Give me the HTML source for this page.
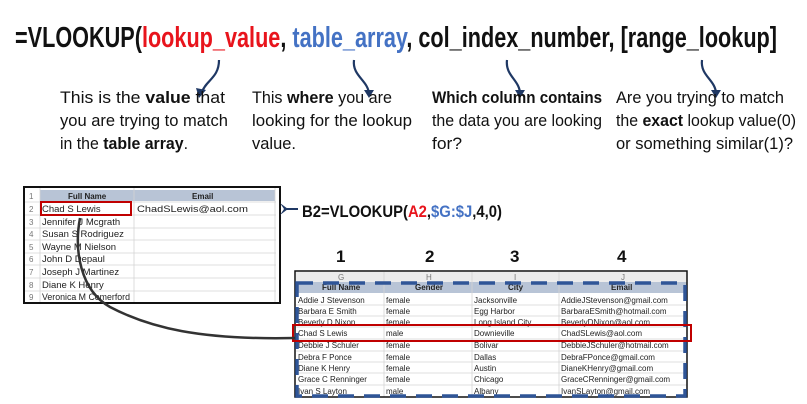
<!DOCTYPE html>
<html><head><meta charset="utf-8"><style>
html,body{margin:0;padding:0;background:#fff;}
svg{display:block;}
text{font-family:"Liberation Sans",sans-serif;}
.s{font-size:8px;fill:#222;}
.h{font-size:8px;font-weight:bold;fill:#222;}
.l{font-size:9.5px;fill:#222;}
.t{font-size:17px;fill:#111;}
</style></head><body>
<svg width="807" height="404" viewBox="0 0 807 404" xmlns="http://www.w3.org/2000/svg">
<rect width="807" height="404" fill="#fff"/>
<text x="15" y="47" font-size="29" font-weight="bold" textLength="762" lengthAdjust="spacingAndGlyphs" fill="#111">=VLOOKUP(<tspan fill="#e8141c">lookup_value</tspan>, <tspan fill="#4472c4">table_array</tspan>, col_index_number, [range_lookup]</text>
<g fill="none" stroke="#1f3864" stroke-width="2.2">
<path d="M219 60 C219 78 206 80 202 92"/>
<path d="M354 60 C352 76 368 80 369 94"/>
<path d="M507 60 C505 76 520 80 520 94"/>
<path d="M702 60 C700 76 716 80 716 94"/>
</g>
<g fill="#1f3864">
<path d="M196 88 L206 90 L199 98 Z"/>
<path d="M364 90 L374 90 L369 98 Z"/>
<path d="M515 90 L525 90 L520 98 Z"/>
<path d="M711 90 L721 90 L716 98 Z"/>
</g>
<text class="t" x="60" y="103" textLength="165" lengthAdjust="spacingAndGlyphs">This is the <tspan font-weight="bold">value</tspan> that</text>
<text class="t" x="60" y="126" textLength="168" lengthAdjust="spacingAndGlyphs">you are trying to match</text>
<text class="t" x="60" y="149" textLength="128" lengthAdjust="spacingAndGlyphs">in the <tspan font-weight="bold">table array</tspan>.</text>
<text class="t" x="252" y="103" textLength="140" lengthAdjust="spacingAndGlyphs">This <tspan font-weight="bold">where</tspan> you are</text>
<text class="t" x="252" y="126" textLength="160" lengthAdjust="spacingAndGlyphs">looking for the lookup</text>
<text class="t" x="252" y="149" textLength="44" lengthAdjust="spacingAndGlyphs">value.</text>
<text class="t" x="432" y="103" textLength="170" lengthAdjust="spacingAndGlyphs" font-weight="bold">Which column contains</text>
<text class="t" x="432" y="126" textLength="170" lengthAdjust="spacingAndGlyphs">the data you are looking</text>
<text class="t" x="432" y="149" textLength="30" lengthAdjust="spacingAndGlyphs">for?</text>
<text class="t" x="616" y="103" textLength="168" lengthAdjust="spacingAndGlyphs">Are you trying to match</text>
<text class="t" x="616" y="126" textLength="180" lengthAdjust="spacingAndGlyphs">the <tspan font-weight="bold">exact</tspan> lookup value(0)</text>
<text class="t" x="616" y="149" textLength="177" lengthAdjust="spacingAndGlyphs">or something similar(1)?</text>

<rect x="40" y="190" width="235" height="11" fill="#b8c4d6"/>
<g stroke="#d4d4d4" stroke-width="0.8">
<line x1="24" y1="202" x2="276" y2="202"/><line x1="24" y1="215" x2="276" y2="215"/>
<line x1="24" y1="228" x2="276" y2="228"/><line x1="24" y1="240" x2="276" y2="240"/>
<line x1="24" y1="253" x2="276" y2="253"/><line x1="24" y1="265" x2="276" y2="265"/>
<line x1="24" y1="278" x2="276" y2="278"/><line x1="24" y1="291" x2="276" y2="291"/>
<line x1="40" y1="188" x2="40" y2="303"/><line x1="134" y1="188" x2="134" y2="303"/>
<line x1="275" y1="188" x2="275" y2="303"/>
</g>
<rect x="24" y="187" width="256" height="116" fill="none" stroke="#111" stroke-width="2"/>
<g font-size="8" fill="#777">
<text x="29" y="199" fill="#777">1</text><text x="29" y="212" fill="#777">2</text><text x="29" y="225" fill="#777">3</text>
<text x="29" y="237" fill="#777">4</text><text x="29" y="250" fill="#777">5</text><text x="29" y="262" fill="#777">6</text>
<text x="29" y="275" fill="#777">7</text><text x="29" y="288" fill="#777">8</text><text x="29" y="300" fill="#777">9</text>
</g>
<text class="h" x="68" y="199">Full Name</text><text class="h" x="192" y="199">Email</text>
<text class="l" x="42" y="212">Chad S Lewis</text><text class="l" x="137" y="212" textLength="111" lengthAdjust="spacingAndGlyphs">ChadSLewis@aol.com</text>
<text class="l" x="42" y="225">Jennifer J Mcgrath</text>
<text class="l" x="42" y="237">Susan S Rodriguez</text>
<text class="l" x="42" y="250">Wayne M Nielson</text>
<text class="l" x="42" y="262">John D Depaul</text>
<text class="l" x="42" y="275">Joseph J Martinez</text>
<text class="l" x="42" y="288">Diane K Henry</text>
<text class="l" x="42" y="300" textLength="88" lengthAdjust="spacingAndGlyphs">Veronica M Comerford</text>
<rect x="41" y="202" width="90" height="13" fill="none" stroke="#c00000" stroke-width="2"/>

<path d="M298 209 L284 209" stroke="#1f3864" stroke-width="2"/>
<path d="M280 203 L288 209 L280 215 L284 209 Z" fill="#1f3864"/>
<text x="302" y="217" font-size="17" font-weight="bold" textLength="200" lengthAdjust="spacingAndGlyphs" fill="#111">B2=VLOOKUP(<tspan fill="#e8141c">A2</tspan>,<tspan fill="#4472c4">$G:$J</tspan>,4,0)</text>

<g font-size="17" font-weight="bold" fill="#111">
<text x="336" y="262">1</text><text x="425" y="262">2</text><text x="510" y="262">3</text><text x="617" y="262">4</text>
</g>

<rect x="296" y="272" width="391" height="10" fill="#ececec"/>
<rect x="296" y="282" width="391" height="11" fill="#b8c4d6"/>
<g stroke="#d4d4d4" stroke-width="0.8">
<line x1="296" y1="305" x2="687" y2="305"/><line x1="296" y1="316" x2="687" y2="316"/>
<line x1="296" y1="327" x2="687" y2="327"/><line x1="296" y1="339" x2="687" y2="339"/>
<line x1="296" y1="351" x2="687" y2="351"/><line x1="296" y1="362" x2="687" y2="362"/>
<line x1="296" y1="373" x2="687" y2="373"/><line x1="296" y1="385" x2="687" y2="385"/>
<line x1="384" y1="272" x2="384" y2="397"/><line x1="472" y1="272" x2="472" y2="397"/>
<line x1="559" y1="272" x2="559" y2="397"/>
</g>
<rect x="295" y="271" width="392" height="126" fill="none" stroke="#111" stroke-width="1.5"/>
<g font-size="8" fill="#777">
<text x="338" y="280" fill="#777">G</text><text x="426" y="280" fill="#777">H</text><text x="514" y="280" fill="#777">I</text><text x="621" y="280" fill="#777">J</text>
</g>
<text class="h" x="322" y="290">Full Name</text><text class="h" x="415" y="290">Gender</text>
<text class="h" x="508" y="290">City</text><text class="h" x="611" y="290">Email</text>
<g>
<text class="s" x="298" y="303">Addie J Stevenson</text><text class="s" x="386" y="303">female</text><text class="s" x="474" y="303">Jacksonville</text><text class="s" x="561" y="303">AddieJStevenson@gmail.com</text>
<text class="s" x="298" y="314">Barbara E Smith</text><text class="s" x="386" y="314">female</text><text class="s" x="474" y="314">Egg Harbor</text><text class="s" x="561" y="314">BarbaraESmith@hotmail.com</text>
<text class="s" x="298" y="325">Beverly D Nixon</text><text class="s" x="386" y="325">female</text><text class="s" x="474" y="325">Long Island City</text><text class="s" x="561" y="325">BeverlyDNixon@aol.com</text>
<text class="s" x="298" y="336">Chad S Lewis</text><text class="s" x="386" y="336">male</text><text class="s" x="474" y="336">Downieville</text><text class="s" x="561" y="336">ChadSLewis@aol.com</text>
<text class="s" x="298" y="348">Debbie J Schuler</text><text class="s" x="386" y="348">female</text><text class="s" x="474" y="348">Bolivar</text><text class="s" x="561" y="348">DebbieJSchuler@hotmail.com</text>
<text class="s" x="298" y="360">Debra F Ponce</text><text class="s" x="386" y="360">female</text><text class="s" x="474" y="360">Dallas</text><text class="s" x="561" y="360">DebraFPonce@gmail.com</text>
<text class="s" x="298" y="371">Diane K Henry</text><text class="s" x="386" y="371">female</text><text class="s" x="474" y="371">Austin</text><text class="s" x="561" y="371">DianeKHenry@gmail.com</text>
<text class="s" x="298" y="382">Grace C Renninger</text><text class="s" x="386" y="382">female</text><text class="s" x="474" y="382">Chicago</text><text class="s" x="561" y="382">GraceCRenninger@gmail.com</text>
<text class="s" x="298" y="394">Ivan S Layton</text><text class="s" x="386" y="394">male</text><text class="s" x="474" y="394">Albany</text><text class="s" x="561" y="394">IvanSLayton@gmail.com</text>
</g>
<rect x="297" y="283" width="388" height="113" fill="none" stroke="#2f5597" stroke-width="3.5" stroke-dasharray="16 10"/>
<rect x="293" y="325" width="398" height="16" fill="none" stroke="#c00000" stroke-width="2"/>

<path d="M80 218 C74 250 80 290 110 307 C150 328 200 340 295 338" fill="none" stroke="#333" stroke-width="2.5"/>
</svg>
</body></html>
